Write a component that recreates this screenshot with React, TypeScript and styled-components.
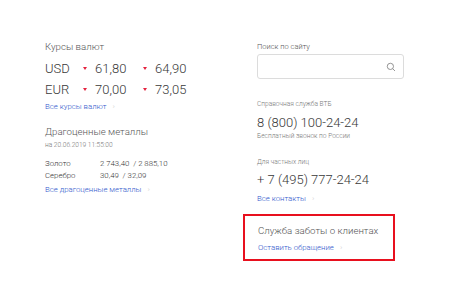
import React from "react";
import styled, { createGlobalStyle } from "styled-components";

const Global = createGlobalStyle`
  html, body { margin: 0; padding: 0; background: #fff; }
  body { font-family: Roboto, "Liberation Sans", Arial, sans-serif; color: #333; }
`;

const Page = styled.div`
  display: flex;
  padding: 41px 0 0 45px;
  width: 474px;
  height: 281px;
  box-sizing: border-box;
`;

const LeftCol = styled.div`
  width: 212px;
  display: flex;
  flex-direction: column;
`;

const RightCol = styled.div`
  width: 150px;
  display: flex;
  flex-direction: column;
`;

const Heading = styled.div<{ $mt?: number }>`
  font-size: 9.7px;
  font-weight: 300;
  color: #555;
  line-height: 12px;
  margin-top: ${(p) => p.$mt ?? 0}px;
  white-space: nowrap;
`;

const RateTable = styled.div`
  display: grid;
  grid-template-columns: 38px 60px 60px;
  row-gap: 1px;
  margin-top: 6px;
`;

const Big = styled.div<{ $mt?: number }>`
  font-size: 13px;
  font-weight: 300;
  color: #383838;
  line-height: 16px;
  margin-top: ${(p) => p.$mt ?? 0}px;
  white-space: nowrap;
  display: flex;
  align-items: center;
`;

const RateCell = styled(Big)`
  line-height: 20px;
`;

const Down = styled.span`
  display: inline-block;
  width: 0;
  height: 0;
  border-left: 2px solid transparent;
  border-right: 2px solid transparent;
  border-top: 3px solid #e5223f;
  margin: -1px 8px 0 0;
`;

const Link = styled.a<{ $mt?: number }>`
  display: flex;
  align-items: center;
  gap: 6px;
  font-size: 7.8px;
  font-weight: 300;
  color: #3158cc;
  text-decoration: none;
  line-height: 10px;
  margin-top: ${(p) => p.$mt ?? 0}px;
  white-space: nowrap;
`;

const Chevron = styled.span`
  color: #d4d4d4;
  font-size: 8px;
`;

const Small = styled.div<{ $mt?: number }>`
  font-size: 6.6px;
  font-weight: 300;
  color: #777;
  line-height: 8px;
  margin-top: ${(p) => p.$mt ?? 0}px;
  white-space: nowrap;
`;

const MetalTable = styled.div`
  display: grid;
  grid-template-columns: 55px auto;
  row-gap: 2px;
  margin-top: 10px;
  font-size: 7.8px;
  font-weight: 300;
  line-height: 10px;
  color: #333;
  white-space: nowrap;
`;

const Label = styled.div`
  font-size: 7.5px;
  font-weight: 300;
  color: #555;
  line-height: 10px;
  margin-top: 1px;
  white-space: nowrap;
`;

const SearchBox = styled.div`
  margin-top: 2px;
  width: 147px;
  height: 25px;
  box-sizing: border-box;
  border: 1px solid #dcdcdc;
  border-radius: 3px;
  display: flex;
  align-items: center;
  justify-content: flex-end;
  padding-right: 7px;
`;

const CareBox = styled.div`
  margin: 10px 0 0 -14px;
  width: 152px;
  height: 47px;
  box-sizing: border-box;
  border: 2px solid #e8101e;
  padding: 9px 0 0 13px;
`;

export default function App() {
  return (
    <>
      <Global />
      <Page>
        <LeftCol>
          <Heading>Курсы валют</Heading>
          <RateTable>
            <RateCell>USD</RateCell>
            <RateCell><Down />61,80</RateCell>
            <RateCell><Down />64,90</RateCell>
            <RateCell>EUR</RateCell>
            <RateCell><Down />70,00</RateCell>
            <RateCell><Down />73,05</RateCell>
          </RateTable>
          <Link $mt={2}>Все курсы валют <Chevron>›</Chevron></Link>
          <Heading $mt={14}>Драгоценные металлы</Heading>
          <Small $mt={3}>на 20.06.2019 11:55:00</Small>
          <MetalTable>
            <div>Золото</div>
            <div>2 743,40&nbsp; / 2 885,10</div>
            <div>Серебро</div>
            <div>30,49&nbsp; / 32,09</div>
          </MetalTable>
          <Link $mt={4}>Все драгоценные металлы <Chevron>›</Chevron></Link>
        </LeftCol>
        <RightCol>
          <Label>Поиск по сайту</Label>
          <SearchBox>
            <svg width="10" height="10" viewBox="0 0 24 24" fill="none" stroke="#808080" strokeWidth="2">
              <circle cx="10.5" cy="10.5" r="7.5" />
              <path d="M16 16l5.5 5.5" />
            </svg>
          </SearchBox>
          <Small $mt={21}>Справочная служба ВТБ</Small>
          <Big $mt={7}>8 (800) 100-24-24</Big>
          <Small $mt={1}>Бесплатный звонок по России</Small>
          <Small $mt={18}>Для частных лиц</Small>
          <Big $mt={6}>+ 7 (495) 777-24-24</Big>
          <Link $mt={6}>Все контакты <Chevron>›</Chevron></Link>
          <CareBox>
            <Heading>Служба заботы о клиентах</Heading>
            <Link $mt={6}>Оставить обращение <Chevron>›</Chevron></Link>
          </CareBox>
        </RightCol>
      </Page>
    </>
  );
}
